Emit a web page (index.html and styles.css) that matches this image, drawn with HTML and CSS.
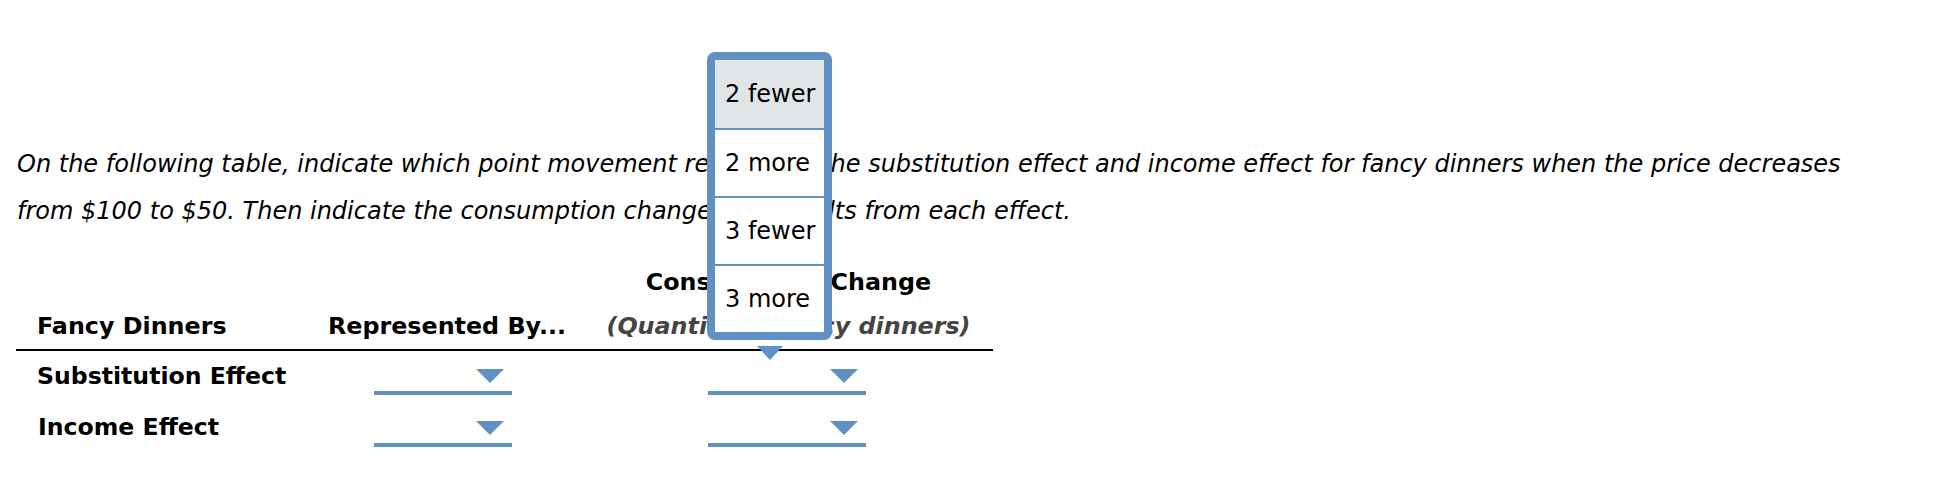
FILE: index.html
```html
<!DOCTYPE html>
<html lang="en">
<head>
<meta charset="utf-8">
<title>Fancy Dinners</title>
<link rel="stylesheet" href="styles.css">
</head>
<body>
<div class="page">
  <p class="intro">On the following table, indicate which point movement represents the substitution effect and income effect for fancy dinners when the price decreases from $100 to $50. Then indicate the consumption change that results from each effect.</p>

  <div class="grid">
    <div class="th th-first">Fancy Dinners</div>
    <div class="th th-center">Represented By...</div>
    <div class="th th-center">Consumption Change<br><span class="sub">(Quantity of fancy dinners)</span></div>

    <div class="td td-label">Substitution Effect</div>
    <div class="td"><div class="select select-a"><span class="caret"></span></div></div>
    <div class="td"><div class="select select-b"><span class="caret"></span></div></div>

    <div class="td td-label td-label-2">Income Effect</div>
    <div class="td"><div class="select select-a"><span class="caret"></span></div></div>
    <div class="td"><div class="select select-b"><span class="caret"></span></div></div>
  </div>

  <div class="menu">
    <ul class="menu-list">
      <li class="menu-item active">2 fewer</li>
      <li class="menu-item">2 more</li>
      <li class="menu-item">3 fewer</li>
      <li class="menu-item">3 more</li>
    </ul>
    <span class="menu-arrow"></span>
  </div>
</div>
</body>
</html>
```

FILE: styles.css
```css
* { box-sizing: border-box; }
html, body { margin: 0; padding: 0; background: #fff; }
body { font-family: "DejaVu Sans", Verdana, sans-serif; color: #000; }

.page {
  position: relative;
  padding: 0 16px;
  height: 486px;
}

.intro {
  margin: 0;
  padding-top: 141px;
  padding-left: 1px;
  max-width: 1862px;
  font-size: 24px;
  font-style: italic;
  line-height: 47px;
}

.grid {
  margin-top: 26px;
  width: 977px;
  display: grid;
  grid-template-columns: 294px 274px 409px;
}

.th {
  font-weight: bold;
  font-size: 23.8px;
  line-height: 44px;
  border-bottom: 2px solid #000;
  height: 90px;
  padding-bottom: 1px;
  display: flex;
  flex-direction: column;
  justify-content: flex-end;
  white-space: nowrap;
}
.th-first { padding-left: 21px; }
.th-center { text-align: center; }
.sub { font-style: italic; color: #444; }

.td { height: 52px; }
.td-label {
  font-weight: bold;
  font-size: 23.6px;
  line-height: 24px;
  padding-left: 21px;
  padding-top: 13px;
  white-space: nowrap;
}
.td-label-2 { padding-top: 12px; padding-left: 22px; }

.select {
  height: 44px;
  border-bottom: 4px solid #6190c3;
  display: flex;
  justify-content: flex-end;
  align-items: flex-start;
  padding-top: 18px;
  padding-right: 8px;
}
.select-a { width: 138px; margin-left: 64px; }
.select-b { width: 158px; margin-left: 124px; }

.caret {
  width: 0;
  height: 0;
  border-left: 14px solid transparent;
  border-right: 14px solid transparent;
  border-top: 14px solid #6190c3;
}

.menu {
  position: absolute;
  left: 707px;
  top: 52px;
  width: 125px;
}
.menu-list {
  list-style: none;
  margin: 0;
  padding: 0;
  border: 8px solid #6190c3;
  border-radius: 8px;
  background: #fff;
}
.menu-item {
  height: 68px;
  display: flex;
  align-items: center;
  padding-left: 10px;
  font-size: 24px;
  color: #000;
  border-top: 2px solid #6190c3;
}
.menu-item:first-child { border-top: 0; }
.menu-item.active { background: #e0e6e8; }

.menu-arrow {
  position: absolute;
  left: 50px;
  top: 294px;
  width: 0;
  height: 0;
  border-left: 13px solid transparent;
  border-right: 13px solid transparent;
  border-top: 14px solid #6190c3;
}
```
